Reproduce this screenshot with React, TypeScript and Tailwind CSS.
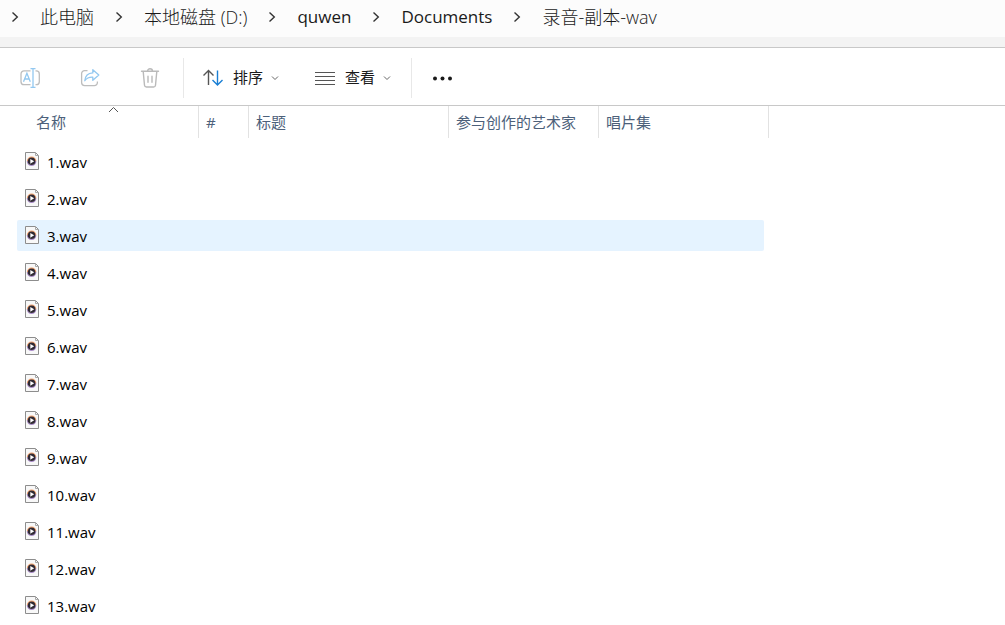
import { useState } from "react";

type Column = {
  id: string
  label: string
  width: string
}

const crumbs = [
  { name: "此电脑", style: "text-[18px] font-light" },
  { name: "本地磁盘 (D:)", style: "text-[18px] font-light" },
  { name: "quwen", style: "text-[17px]" },
  { name: "Documents", style: "text-[17px]" },
  { name: "录音-副本-wav", style: "text-[18px] font-light" }
]

const columns: Column[] = [
  { id: "name", label: "名称", width: "w-[182px]" },
  { id: "number", label: "#", width: "w-[50px]" },
  { id: "title", label: "标题", width: "w-[200px]" },
  { id: "artist", label: "参与创作的艺术家", width: "w-[150px]" },
  { id: "album", label: "唱片集", width: "w-[170px]" }
]

const files = Array.from({ length: 13 }, (_, i) => `${i + 1}.wav`)

function CrumbChevron() {
  return (
    <svg className="h-3 w-2 shrink-0" viewBox="0 0 8 12" fill="none" stroke="#333" strokeWidth="1.4">
      <path d="M1.5 1.5 6.3 6 1.5 10.5" />
    </svg>
  )
}

function SmallChevron() {
  return (
    <svg className="h-2 w-2 shrink-0" viewBox="0 0 8 8" fill="none" stroke="#666" strokeWidth="1">
      <path d="M1 2.5 4 5.5 7 2.5" />
    </svg>
  )
}

function RenameIcon() {
  return (
    <svg className="size-5" viewBox="0 0 20 20" fill="none" strokeWidth="1.3">
      <path d="M10.5 2.9H4A3 3 0 0 0 1 5.9v7.8a3 3 0 0 0 3 3h6.5M15.5 2.9h.8a3 3 0 0 1 3 3v7.8a3 3 0 0 1-3 3h-.8" stroke="#bdbdbd" />
      <path d="m3.5 13.7 3.4-8.4 3.4 8.4M4.7 11h4.4M10.5.7h5M10.5 19.3h5M13 .7v18.6" stroke="#93c8f0" />
    </svg>
  )
}

function ShareIcon() {
  return (
    <svg className="size-5" viewBox="0 0 20 20" fill="none" strokeWidth="1.3" strokeLinejoin="round">
      <path d="M7.5 2.6H4.6a3 3 0 0 0-3 3v9a3 3 0 0 0 3 3h9.8a3 3 0 0 0 3-3v-1.2" stroke="#bdbdbd" />
      <path d="M12.8 1.7 18.8 7l-6 5.3V9.2C9 9 6.6 10.2 4.8 12.7 5.2 8.2 7.8 5.2 12.8 4.9Z" stroke="#93c8f0" />
    </svg>
  )
}

function TrashIcon() {
  return (
    <svg className="size-5" viewBox="0 0 20 20" fill="none" stroke="#bababa" strokeWidth="1.4" strokeLinecap="round">
      <path d="M1.5 3.3h17M7.5 3.1a2.5 2.3 0 0 1 5 0M3.2 3.5l1.3 13.7a2 2 0 0 0 2 1.8h7a2 2 0 0 0 2-1.8L16.8 3.5M8 8.3v6M12 8.3v6" />
    </svg>
  )
}

function SortIcon() {
  return (
    <svg className="size-5" viewBox="0 0 20 20" fill="none" strokeWidth="1.4">
      <path d="M.5 7.5 5.5 2.5l5 5M5.5 2.5v14.5" stroke="#555" />
      <path d="M9.5 12 14.5 17l5-5M14.5 17V2.5" stroke="#1a7fd4" />
    </svg>
  )
}

function ViewIcon() {
  return (
    <svg className="size-5" viewBox="0 0 20 20" fill="none" stroke="#555" strokeWidth="1">
      <path d="M0 4.5h20M0 8.5h20M0 12.5h20M0 16.5h20" />
    </svg>
  )
}

function MediaFileIcon() {
  return (
    <svg className="h-[18px] w-[14px] shrink-0" viewBox="0 0 14 18" fill="none">
      <path d="M.5.5h10l3 3v14H.5Z" fill="#f8f8f8" stroke="#8d8d8d" />
      <path d="M10.5.5v3h3" stroke="#aaa" />
      <path d="M2.4 9.3A4.2 4.2 0 0 1 10.8 9.3" stroke="#f3a06a" strokeWidth="1.2" />
      <path d="M2.4 9.3A4.2 4.2 0 0 0 10.8 9.3" stroke="#a98bc8" strokeWidth="1.2" />
      <circle cx="6.6" cy="9.3" r="3.8" fill="#302a33" />
      <path d="M5.3 6.9 9.2 9.3l-3.9 2.4Z" fill="#fff" />
    </svg>
  )
}

export default function App() {
  const [selected, setSelected] = useState("3.wav")

  return (
    <div className="min-h-screen bg-white font-['Open_Sans','Noto_Sans_CJK_SC',sans-serif] text-[15px] text-black">
      <nav aria-label="路径" className="h-[37px] bg-[#fcfcfc] pl-[11px]">
        <ol className="flex h-[34px] items-center gap-[21px] leading-6 whitespace-nowrap text-[#1a1a1a]">
          {crumbs.map((crumb) => (
            <li key={crumb.name} className="flex items-center gap-[21px]">
              <CrumbChevron />
              <a href="#" className={crumb.style}>{crumb.name}</a>
            </li>
          ))}
        </ol>
      </nav>
      <div className="h-[11px] border-b border-[#c8c8c8] bg-[#f3f3f3]" />

      <div className="flex h-[58px] items-center border-b border-[#c8c8c8] pt-0.5 pl-5 text-[#1a1a1a]">
        <div className="flex gap-10 pr-[23px]">
          <button type="button" aria-label="重命名" disabled><RenameIcon /></button>
          <button type="button" aria-label="共享" disabled><ShareIcon /></button>
          <button type="button" aria-label="删除" disabled><TrashIcon /></button>
        </div>
        <div className="flex h-10 items-center gap-9 border-x border-[#e8e8e8] pr-5 pl-[19px]">
          <button type="button" className="flex items-center gap-2">
            <SortIcon />
            <span className="pl-0.5">排序</span>
            <SmallChevron />
          </button>
          <button type="button" className="flex items-center gap-2">
            <ViewIcon />
            <span className="pl-0.5">查看</span>
            <SmallChevron />
          </button>
        </div>
        <button type="button" aria-label="查看更多" className="ml-5">
          <svg className="size-5" viewBox="0 0 20 20" fill="#1a1a1a">
            <circle cx="3" cy="10.5" r="2" />
            <circle cx="10.5" cy="10.5" r="2" />
            <circle cx="18" cy="10.5" r="2" />
          </svg>
        </button>
      </div>

      <table className="ml-[17px] table-fixed">
        <thead>
          <tr>
            {columns.map((column, i) => (
              <th key={column.id} className={`${column.width} p-0 pb-[5px] text-left font-normal text-[#4c607a]`}>
                <button
                  type="button"
                  className={`relative flex h-8 w-full items-center border-r border-[#e2e2e2] whitespace-nowrap ${i === 0 ? "pl-[19px]" : "pl-[7px]"}`}
                >
                  {column.label}
                  {i === 0 && (
                    <svg className="absolute top-0 left-[91px] h-2 w-[11px]" viewBox="0 0 11 8" fill="none" stroke="#555">
                      <path d="M1 6 5.5 1.5 10 6" />
                    </svg>
                  )}
                </button>
              </th>
            ))}
          </tr>
        </thead>
        <tbody>
          {files.map((file) => (
            <tr key={file} onClick={() => setSelected(file)}>
              {columns.map((column, i) => (
                <td key={column.id} className="px-0 py-[3px]">
                  <div
                    className={`flex h-[31px] items-start gap-2 pt-1.5 ${file === selected ? "bg-[#e5f3ff]" : ""} ${i === 0 ? "rounded-l-xs pl-2" : ""} ${i === columns.length - 1 ? "mr-[5px] rounded-r-xs" : ""}`}
                  >
                    {i === 0 && (
                      <>
                        <MediaFileIcon />
                        <span className="leading-5">{file}</span>
                      </>
                    )}
                  </div>
                </td>
              ))}
            </tr>
          ))}
        </tbody>
      </table>
    </div>
  );
}
